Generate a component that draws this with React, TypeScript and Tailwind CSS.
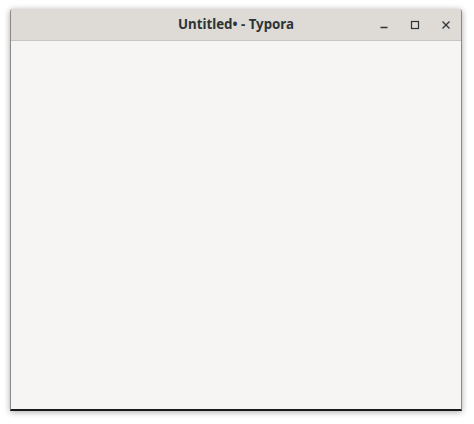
export default function App() {
  return (
    <div className="w-[474px] h-[424px] bg-white pl-[10px] pt-[9px]">
      <div className="w-[452px] h-[402px] flex flex-col bg-[#f6f5f4] border-l border-r border-[#8a8987] border-b-2 border-b-[#1a1a1a] rounded-t-[3px] shadow-[0_1px_6px_rgba(0,0,0,0.35)] overflow-hidden">
        <div className="h-[32px] shrink-0 relative flex items-center justify-center bg-[#dedbd7] border-b border-[#c8c4bf]">
          <span className="text-[13.3px] font-bold text-[#2e3436] font-['Noto_Sans',sans-serif]">
            Untitled• - Typora
          </span>
          <div className="absolute right-0 top-0 h-full flex items-center gap-[17px] pr-[8px]">
            <svg width="14" height="14" viewBox="0 0 14 14" className="text-[#2e3436]">
              <path d="M3.5 9.5h7" stroke="currentColor" strokeWidth="1.3" />
            </svg>
            <svg width="14" height="14" viewBox="0 0 14 14" className="text-[#2e3436]">
              <rect x="3.5" y="3.5" width="7" height="7" fill="none" stroke="currentColor" strokeWidth="1.2" />
            </svg>
            <svg width="14" height="14" viewBox="0 0 14 14" className="text-[#2e3436]">
              <path d="M3.5 3.5l7 7M10.5 3.5l-7 7" stroke="currentColor" strokeWidth="1.3" />
            </svg>
          </div>
        </div>
        <div className="flex-1" />
      </div>
    </div>
  );
}
